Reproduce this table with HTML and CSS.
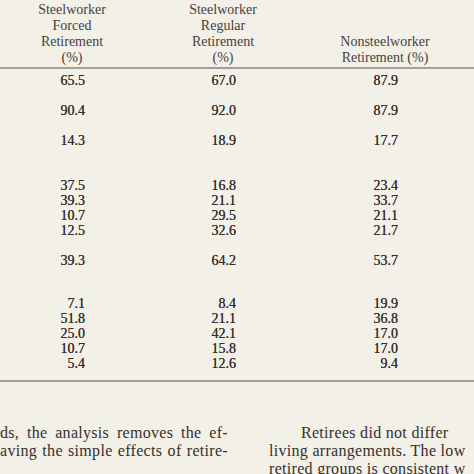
FILE: index.html
```html
<!DOCTYPE html>
<html>
<head>
<meta charset="utf-8">
<link rel="stylesheet" href="styles.css">
</head>
<body>
<div class="page">
  <div class="table">
    <div class="thead">
      <div class="th">Steelworker<br>Forced<br>Retirement<br>(%)</div>
      <div class="th">Steelworker<br>Regular<br>Retirement<br>(%)</div>
      <div class="th">Nonsteelworker<br>Retirement (%)</div>
    </div>
    <div class="rule top"></div>
    <div class="tbody">
      <div class="grp g1">
        <div class="cell">65.5</div>
        <div class="cell">67.0</div>
        <div class="cell">87.9</div>
      </div>
      <div class="grp g2">
        <div class="cell">90.4</div>
        <div class="cell">92.0</div>
        <div class="cell">87.9</div>
      </div>
      <div class="grp g3">
        <div class="cell">14.3</div>
        <div class="cell">18.9</div>
        <div class="cell">17.7</div>
      </div>
      <div class="grp g4">
        <div class="cell">37.5<br>39.3<br>10.7<br>12.5</div>
        <div class="cell">16.8<br>21.1<br>29.5<br>32.6</div>
        <div class="cell">23.4<br>33.7<br>21.1<br>21.7</div>
      </div>
      <div class="grp g5">
        <div class="cell">39.3</div>
        <div class="cell">64.2</div>
        <div class="cell">53.7</div>
      </div>
      <div class="grp g6">
        <div class="cell">7.1<br>51.8<br>25.0<br>10.7<br>5.4</div>
        <div class="cell">8.4<br>21.1<br>42.1<br>15.8<br>12.6</div>
        <div class="cell">19.9<br>36.8<br>17.0<br>17.0<br>9.4</div>
      </div>
    </div>
    <div class="rule bottom"></div>
  </div>
  <div class="text">
    <div class="col left">
      <div class="line just">ds, the analysis removes the ef-</div>
      <div class="line just">aving the simple effects of retire-</div>
    </div>
    <div class="col right">
      <div class="line indent">Retirees did not differ</div>
      <div class="line">living arrangements. The low</div>
      <div class="line">retired groups is consistent w</div>
    </div>
  </div>
</div>
</body>
</html>
```

FILE: styles.css
```css
html, body {
  margin: 0;
  padding: 0;
  background: #f3f0e8;
}
body {
  width: 474px;
  height: 474px;
  overflow: hidden;
  font-family: "Liberation Serif", "Times New Roman", serif;
  color: #34302d;
}
.page {
  width: 474px;
  height: 474px;
  overflow: hidden;
}
.table {
  width: 474px;
}
.thead, .grp {
  display: grid;
  grid-template-columns: 144px 158px 166px;
}
.thead {
  align-items: end;
  padding-top: 2px;
  font-size: 14px;
  line-height: 16px;
  color: #45413e;
}
.th {
  text-align: center;
}
.rule {
  height: 2px;
  background: #a29f99;
}
.rule.top {
  margin-top: 1px;
}
.tbody {
  padding-top: 4px;
  font-size: 14px;
  line-height: 15px;
  text-shadow: 0 0 0.4px #34302d;
}
.cell {
  width: 26px;
  margin: 0 auto;
  text-align: right;
}
.g2, .g3, .g5 { margin-top: 15px; }
.g4 { margin-top: 30px; }
.g6 { margin-top: 28px; }
.rule.bottom {
  margin-top: 9px;
}
.text {
  display: flex;
  margin-top: 42px;
  font-size: 16px;
  line-height: 18px;
  letter-spacing: 0.3px;
  color: #34302d;
}
.col.left {
  width: 228px;
  flex: none;
}
.col.right {
  margin-left: 41px;
  flex: none;
  width: 205px;
}
.line {
  white-space: nowrap;
}
.line.just {
  white-space: normal;
  text-align: justify;
  text-align-last: justify;
}
.line.indent {
  text-indent: 32px;
}
```
